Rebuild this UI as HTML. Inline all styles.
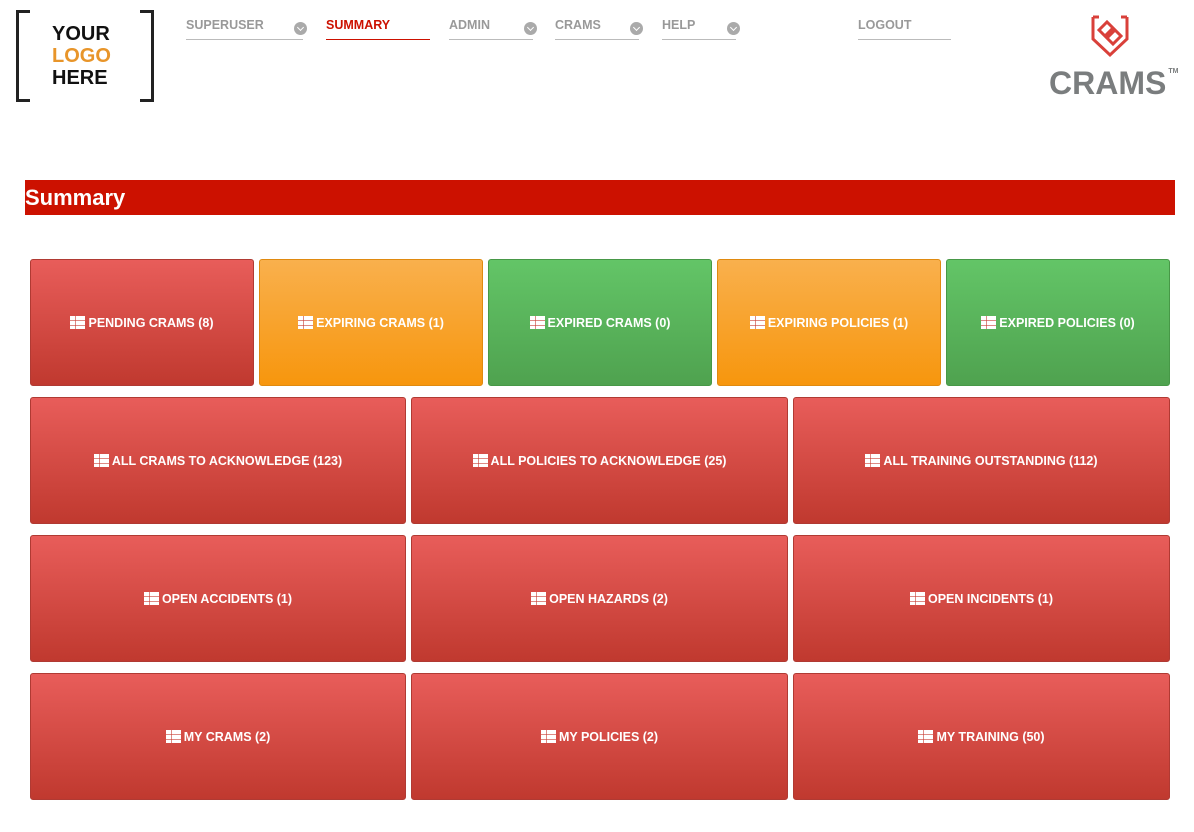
<!DOCTYPE html>
<html><head><style>
*{margin:0;padding:0;box-sizing:border-box}
body{width:1194px;height:832px;background:#fff;font-family:"Liberation Sans",sans-serif;position:relative;overflow:hidden}
.bl,.br{position:absolute;top:10px;width:14px;height:92px;border:3px solid #222}
.bl{left:16px;border-right:none}
.br{left:140px;border-left:none}
.lt{position:absolute;font-weight:bold;font-size:20px;line-height:22px}
.nav{position:absolute;top:18px;font-size:12.5px;font-weight:bold;color:#999;border-bottom:1px solid #bbb;height:22px}
.nav i{position:absolute;right:-4px;top:4px;width:13px;height:13px;border-radius:50%;background:#aaa}
.nav i:after{content:"";position:absolute;left:4px;top:3px;width:4px;height:4px;border-right:1.5px solid #fff;border-bottom:1.5px solid #fff;transform:rotate(45deg)}
.bar{position:absolute;left:25px;top:180px;width:1150px;height:35px;background:#cc1100;color:#fff;font-weight:bold;font-size:22px;line-height:35px}
.t{position:absolute;height:127px;border-radius:3px;color:#fff;font-weight:bold;font-size:12.5px;display:flex;align-items:center;justify-content:center}
.r{background:linear-gradient(#e85d5a,#c0392f);border:1px solid #b03a33}
.o{background:linear-gradient(#f9b04d,#f7960d);border:1px solid #e08a10}
.g{background:linear-gradient(#63c567,#4fa24f);border:1px solid #479847}
.ic{display:inline-block;width:15px;height:13px;margin-right:3px;background:#fff;position:relative}
.ic:before{content:"";position:absolute;left:5px;top:0;width:1px;height:13px;background:rgba(200,60,50,.6)}
.ic:after{content:"";position:absolute;left:0;top:4px;width:15px;height:4px;border-top:1px solid rgba(200,60,50,.6);border-bottom:1px solid rgba(200,60,50,.6)}
</style></head><body>
<div class="bl"></div><div class="br"></div>
<div class="lt" style="left:52px;top:23px;color:#111">YOUR</div>
<div class="lt" style="left:52px;top:45px;color:#e8952a">LOGO</div>
<div class="lt" style="left:52px;top:67px;color:#111">HERE</div>
<div class="nav" style="left:186px;width:117px">SUPERUSER<i></i></div>
<div class="nav" style="left:326px;width:104px;color:#cc1100;border-color:#cc1100">SUMMARY</div>
<div class="nav" style="left:449px;width:84px">ADMIN<i></i></div>
<div class="nav" style="left:555px;width:84px">CRAMS<i></i></div>
<div class="nav" style="left:662px;width:74px">HELP<i></i></div>
<div class="nav" style="left:858px;width:93px">LOGOUT</div>
<svg style="position:absolute;left:1090px;top:14px" width="40" height="44" viewBox="0 0 40 44"><path d="M3 3h6M31 3h6M3 3v22l17 16 17-16V3" fill="none" stroke="#d9403a" stroke-width="3"/><path d="M9 16l8-8 8 8-8 8zM15 22l8-8 8 8-8 8z" fill="none" stroke="#d9403a" stroke-width="3"/></svg>
<div style="position:absolute;left:1049px;top:65px;font-size:32px;font-weight:bold;color:#7a7d7e">CRAMS<sup style="font-size:7px;vertical-align:top;position:relative;top:3px;margin-left:2px">TM</sup></div>
<div class="bar">Summary</div>
<div class="t r" style="left:30px;top:259px;width:224px"><span class="ic"></span>PENDING CRAMS (8)</div>
<div class="t o" style="left:259px;top:259px;width:224px"><span class="ic"></span>EXPIRING CRAMS (1)</div>
<div class="t g" style="left:488px;top:259px;width:224px"><span class="ic"></span>EXPIRED CRAMS (0)</div>
<div class="t o" style="left:717px;top:259px;width:224px"><span class="ic"></span>EXPIRING POLICIES (1)</div>
<div class="t g" style="left:946px;top:259px;width:224px"><span class="ic"></span>EXPIRED POLICIES (0)</div>
<div class="t r" style="left:30px;top:397px;width:376px"><span class="ic"></span>ALL CRAMS TO ACKNOWLEDGE (123)</div>
<div class="t r" style="left:411px;top:397px;width:377px"><span class="ic"></span>ALL POLICIES TO ACKNOWLEDGE (25)</div>
<div class="t r" style="left:793px;top:397px;width:377px"><span class="ic"></span>ALL TRAINING OUTSTANDING (112)</div>
<div class="t r" style="left:30px;top:535px;width:376px"><span class="ic"></span>OPEN ACCIDENTS (1)</div>
<div class="t r" style="left:411px;top:535px;width:377px"><span class="ic"></span>OPEN HAZARDS (2)</div>
<div class="t r" style="left:793px;top:535px;width:377px"><span class="ic"></span>OPEN INCIDENTS (1)</div>
<div class="t r" style="left:30px;top:673px;width:376px"><span class="ic"></span>MY CRAMS (2)</div>
<div class="t r" style="left:411px;top:673px;width:377px"><span class="ic"></span>MY POLICIES (2)</div>
<div class="t r" style="left:793px;top:673px;width:377px"><span class="ic"></span>MY TRAINING (50)</div>
</body></html>
